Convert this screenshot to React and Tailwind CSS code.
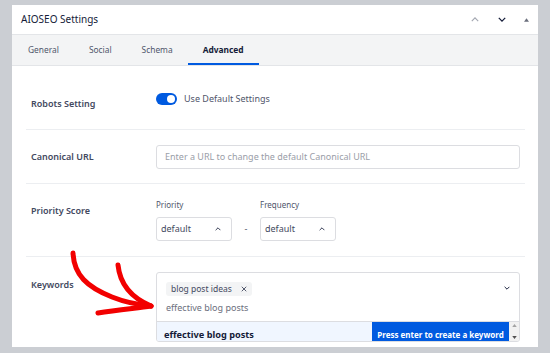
import React from 'react';

const font = { fontFamily: '"Noto Sans", "Open Sans", Arial, sans-serif' };

const ChevronUp = ({ className }) => (
  <svg viewBox="0 0 10 6" className={className} fill="none" stroke="currentColor" strokeWidth="1.4">
    <path d="M1 5 L5 1 L9 5" />
  </svg>
);

const ChevronDown = ({ className }) => (
  <svg viewBox="0 0 10 6" className={className} fill="none" stroke="currentColor" strokeWidth="1.6">
    <path d="M1 1 L5 5 L9 1" />
  </svg>
);

const Select = ({ label }) => (
  <div className="flex flex-col">
    <span className="text-[8px] text-[#50566b] leading-[12px] mb-[6px]">{label}</span>
    <div className="w-[76px] h-[24px] border border-[#dcdde1] rounded-[3px] flex items-center justify-between pl-[4px] pr-[10px] text-[9px] text-[#434960]">
      <span>default</span>
      <ChevronUp className="w-[6px] h-[4px] text-[#141b38]" />
    </div>
  </div>
);

const tabs = ['General', 'Social', 'Schema', 'Advanced'];

export default function App() {
  return (
    <div className="w-[550px] h-[353px] bg-[#cbced3] pt-[5px] pl-[12px] overflow-hidden" style={font}>
      <div className="relative w-[526px] h-[342px] bg-white overflow-hidden">
        {/* header */}
        <div className="h-[30px] border-b border-[#e3e5e8] flex items-center pl-[9px] pr-[9px]">
          <span className="text-[10px] text-[#141b38]">AIOSEO Settings</span>
          <div className="ml-auto flex items-center">
            <ChevronUp className="w-[8px] h-[5px] text-[#a3a7b1]" />
            <ChevronDown className="w-[8px] h-[5px] text-[#141b38] ml-[19px]" />
            <svg viewBox="0 0 6 4" className="w-[5px] h-[4px] ml-[18px] text-[#6b6f7d]" fill="currentColor">
              <path d="M0 4 L3 0 L6 4 Z" />
            </svg>
          </div>
        </div>

        {/* tabs */}
        <div className="h-[31px] bg-[#f3f4f5] flex pl-[1px] border-b border-[#e3e5e8]">
          {tabs.map((t) => (
            <div
              key={t}
              className={`px-[15px] flex items-center text-[8.4px] ${
                t === 'Advanced'
                  ? 'font-bold text-[#141b38] border-b-2 border-[#005ae0] pt-[2px]'
                  : 'text-[#50566b]'
              }`}
            >
              {t}
            </div>
          ))}
        </div>

        <div className="ml-[14px] mr-[13px]">
          {/* robots */}
          <div className="h-[64px] border-b border-[#eceef1] flex items-start">
            <div className="w-[130px] pl-[5px] pt-[31px] text-[9px] font-semibold text-[#434960]">Robots Setting</div>
            <div className="pt-[26px] flex items-center">
              <div className="w-[21px] h-[12px] rounded-full bg-[#005ae0] relative">
                <div className="absolute right-[2px] top-[2px] w-[8px] h-[8px] rounded-full bg-white" />
              </div>
              <span className="ml-[7px] text-[9px] text-[#50566b]">Use Default Settings</span>
            </div>
          </div>

          {/* canonical */}
          <div className="h-[54px] border-b border-[#eceef1] flex items-center">
            <div className="w-[130px] pl-[5px] text-[9px] font-semibold text-[#434960]">Canonical URL</div>
            <div className="w-[364px] h-[24px] border border-[#dcdde1] rounded-[3px] flex items-center pl-[8px] text-[9px] text-[#9a9ea8]">
              Enter a URL to change the default Canonical URL
            </div>
          </div>

          {/* priority */}
          <div className="h-[73px] border-b border-[#eceef1] flex items-start">
            <div className="w-[130px] pl-[5px] pt-[20px] text-[9px] font-semibold text-[#434960]">Priority Score</div>
            <div className="pt-[15px] flex items-end">
              <Select label="Priority" />
              <span className="w-[28px] h-[24px] flex items-center justify-center text-[9px] text-[#50566b]">-</span>
              <Select label="Frequency" />
            </div>
          </div>

          {/* keywords */}
          <div className="flex items-start pt-[15px]">
            <div className="w-[130px] pl-[5px] pt-[6px] text-[9px] font-semibold text-[#434960]">Keywords</div>
            <div className="w-[364px] h-[70px] border border-[#dcdde1] rounded-[3px] flex flex-col overflow-hidden">
              <div className="h-[49px] flex items-start pl-[9px] pr-[9px] pt-[9px] border-b border-[#dcdde1]">
                <div className="flex flex-col items-start">
                  <div className="h-[14px] bg-[#f3f4f5] rounded-[3px] flex items-center px-[5px] text-[8.5px] text-[#434960]">
                    blog post ideas
                    <svg viewBox="0 0 8 8" className="w-[6px] h-[6px] ml-[9px] text-[#434960]" fill="none" stroke="currentColor" strokeWidth="1.2">
                      <path d="M1 1 L7 7 M7 1 L1 7" />
                    </svg>
                  </div>
                  <span className="mt-[5px] text-[9px] text-[#6b6f7d]">effective blog posts</span>
                </div>
                <ChevronDown className="ml-auto mt-[4px] w-[6px] h-[4px] text-[#141b38]" />
              </div>
              <div className="flex-1 flex">
                <div className="w-[215px] bg-[#f0f6ff] flex items-end pl-[7px] text-[9.2px] font-bold text-[#141b38] leading-[13px]">
                  effective blog posts
                </div>
                <div className="w-[137px] bg-[#005ae0] flex items-end justify-center whitespace-nowrap text-[8px] font-bold text-white leading-[13px]">
                  Press enter to create a keyword
                </div>
                <div className="flex-1 bg-[#f1f1f1] flex flex-col items-center justify-between py-[2px]">
                  <svg viewBox="0 0 6 4" className="w-[5px] h-[3px]" fill="#a3a3a3"><path d="M0 4 L3 0 L6 4 Z" /></svg>
                  <svg viewBox="0 0 6 4" className="w-[5px] h-[3px]" fill="#505050"><path d="M0 0 L6 0 L3 4 Z" /></svg>
                </div>
              </div>
            </div>
          </div>
        </div>

        {/* red annotation arrow */}
        <svg className="absolute left-0 top-0 pointer-events-none" width="526" height="342" viewBox="0 0 526 342">
          <g fill="none" stroke="#f20000" strokeWidth="5" strokeLinecap="round" strokeLinejoin="round">
            <path d="M61 248 C 62 270, 75 282, 100 292 C 115 298, 128 300, 139 301" />
            <path d="M106 260 C 108 280, 120 293, 139 301" />
            <path d="M86 308 C 105 305, 125 303, 139 301" />
          </g>
        </svg>
      </div>
    </div>
  );
}
